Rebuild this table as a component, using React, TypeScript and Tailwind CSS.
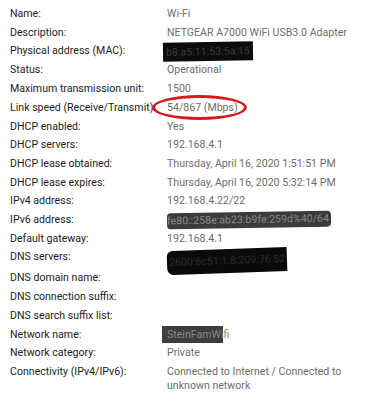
const ROWS: { label: string; value?: string; kind?: string }[] = [
  { label: "Name:", value: "Wi-Fi" },
  { label: "Description:", value: "NETGEAR A7000 WiFi USB3.0 Adapter" },
  { label: "Physical address (MAC):", value: "b8:a5:11:53:5a:15", kind: "mac" },
  { label: "Status:", value: "Operational" },
  { label: "Maximum transmission unit:", value: "1500" },
  { label: "Link speed (Receive/Transmit):", value: "54/867 (Mbps)", kind: "circle" },
  { label: "DHCP enabled:", value: "Yes" },
  { label: "DHCP servers:", value: "192.168.4.1" },
  { label: "DHCP lease obtained:", value: "Thursday, April 16, 2020 1:51:51 PM" },
  { label: "DHCP lease expires:", value: "Thursday, April 16, 2020 5:32:14 PM" },
  { label: "IPv4 address:", value: "192.168.4.22/22" },
  { label: "IPv6 address:", value: "fe80::258e:ab23:b9fe:259d%40/64", kind: "ipv6" },
  { label: "Default gateway:", value: "192.168.4.1" },
  { label: "DNS servers:", value: "2600:6c51:1:8:209:76:52", kind: "dns" },
  { label: "DNS domain name:" },
  { label: "DNS connection suffix:" },
  { label: "DNS search suffix list:" },
  { label: "Network name:", value: "SteinFamWifi", kind: "net" },
  { label: "Network category:", value: "Private" },
  {
    label: "Connectivity (IPv4/IPv6):",
    value: "Connected to Internet / Connected to unknown network",
    kind: "wrap",
  },
];

function Value({ value, kind }: { value?: string; kind?: string }) {
  if (!value) return null;
  if (kind === "mac") {
    return (
      <span className="-ml-[4px] inline-block -rotate-1 bg-[#0c0c0c] px-[3px] leading-[19px] text-[#3a3a3a]">
        {value}
      </span>
    );
  }
  if (kind === "circle") {
    return (
      <div className="relative">
        <span className="absolute left-[-15px] top-[-4px] h-[25px] w-[95px] rounded-[50%] border-[3px] border-[#d7191e]" />
        <span className="relative">{value}</span>
      </div>
    );
  }
  if (kind === "ipv6") {
    return (
      <span className="inline-block -rotate-1 rounded-sm bg-[#3b3b3b] pr-[2px] leading-[16px] text-[#8a8a8a]">
        {value}
      </span>
    );
  }
  if (kind === "dns") {
    return (
      <span className="mt-[-3px] inline-block translate-y-[4px] -rotate-2 rounded-l-md bg-[#0a0a0a] px-[2px] leading-[24px] text-[#2a2a2a]">
        {value}
      </span>
    );
  }
  if (kind === "net") {
    return (
      <span className="relative -ml-[5px] inline-block bg-[linear-gradient(to_right,#3d3d3d_61px,transparent_61px)] pl-[5px] leading-[17px] text-[#8a8a8a]">
        {value}
      </span>
    );
  }
  if (kind === "wrap") {
    return <div className="w-[182px] whitespace-normal pt-[2px] leading-[14px]">{value}</div>;
  }
  return <div>{value}</div>;
}

export default function App() {
  return (
    <div
      className="h-[407px] w-[389px] overflow-hidden bg-white pt-[5px] text-[10.6px]"
      style={{ fontFamily: '"Segoe UI", Roboto, sans-serif' }}
    >
      <div className="flex flex-col">
        {ROWS.map((row) => (
          <div key={row.label} className="flex min-h-[18.7px] items-start leading-[18.7px]">
            <div className="w-[167px] shrink-0 whitespace-nowrap pl-[10px] text-[#1c1c1c]">{row.label}</div>
            <div className="flex h-full min-h-[18.7px] items-center whitespace-nowrap text-[#6d6d6d]">
              <Value value={row.value} kind={row.kind} />
            </div>
          </div>
        ))}
      </div>
    </div>
  );
}
